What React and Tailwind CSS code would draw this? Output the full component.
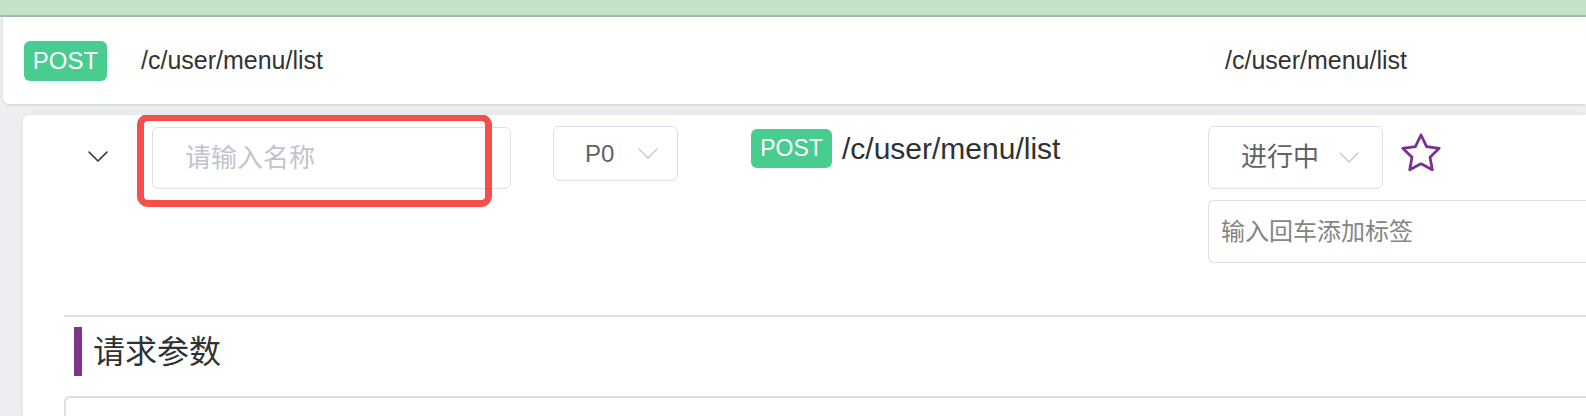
import React from "react";

const font = { fontFamily: '"Liberation Sans", "Noto Sans CJK SC", sans-serif' };

function Chevron({ className, color = "#333", sw = 1.6 }) {
  return (
    <svg viewBox="0 0 20 11" className={className} fill="none">
      <path d="M1 1 L10 10 L19 1" stroke={color} strokeWidth={sw} strokeLinecap="round" strokeLinejoin="round" />
    </svg>
  );
}

function Star() {
  return (
    <svg viewBox="0 0 44 42" className="w-[44px] h-[42px]" fill="none">
      <path
        d="M22 3 L27.6 14.6 L40.2 16.3 L31 25.2 L33.3 37.8 L22 31.8 L10.7 37.8 L13 25.2 L3.8 16.3 L16.4 14.6 Z"
        stroke="#7b2f8f"
        strokeWidth="2.8"
        strokeLinejoin="round"
      />
    </svg>
  );
}

export default function App() {
  return (
    <div className="w-[1586px] h-[416px] overflow-hidden bg-[#eceef1] flex flex-col" style={font}>
      <div className="h-[17px] shrink-0 bg-[#c4e2c6] border-b-2 border-[#a4bba6]" />
      <div className="ml-[3px] h-[87px] shrink-0 bg-white rounded-bl-md shadow-sm flex items-center pl-[21px]">
        <div className="shrink-0 w-[83px] h-[40px] rounded-[6px] bg-[#49cc90] text-white text-[24px] flex items-center justify-center">
          POST
        </div>
        <div className="shrink-0 ml-[34px] w-[1084px] text-[25px] text-[#333]">/c/user/menu/list</div>
        <div className="shrink-0 text-[25px] text-[#333]">/c/user/menu/list</div>
      </div>
      <div className="mt-[11px] ml-[23px] flex-1 bg-white rounded-tl-md shadow-[0_0_6px_rgba(0,0,0,0.06)] relative pt-[11px] overflow-hidden">
        <div className="flex items-start">
          <div className="shrink-0 ml-[65px] mt-[25px] w-[20px]">
            <Chevron className="w-[20px] h-[11px]" />
          </div>
          <div className="shrink-0 ml-[44px] mt-[1px] w-[359px] h-[62px] border-[1.5px] border-[#dcdfe6] rounded-[6px] flex items-center pl-[32px] text-[26px] text-[#c0c4cc]">
            请输入名称
          </div>
          <div className="shrink-0 ml-[42px] w-[125px] h-[55px] border-[1.5px] border-[#dcdfe6] rounded-[6px] flex items-center pl-[31px] text-[24px] text-[#606266]">
            <span>P0</span>
            <Chevron className="ml-[24px] w-[20px] h-[11px]" color="#c0c4cc" sw={1.2} />
          </div>
          <div className="shrink-0 ml-[73px] w-[457px] flex items-center">
            <div className="shrink-0 w-[81px] h-[39px] rounded-[6px] bg-[#49cc90] text-white text-[23px] flex items-center justify-center">
              POST
            </div>
            <div className="ml-[10px] text-[30px] text-[#303133]">/c/user/menu/list</div>
          </div>
          <div className="shrink-0 flex flex-col">
            <div className="flex items-start">
              <div className="shrink-0 w-[175px] h-[63px] border-[1.5px] border-[#dcdfe6] rounded-[6px] flex items-center pl-[32px] text-[26px] text-[#606266]">
                <span>进行中</span>
                <Chevron className="ml-[20px] w-[20px] h-[11px]" color="#c0c4cc" sw={1.2} />
              </div>
              <div className="shrink-0 ml-[16px] mt-[6px]">
                <Star />
              </div>
            </div>
            <div className="mt-[11px] w-[420px] h-[63px] border-[1.5px] border-r-0 border-[#dcdfe6] rounded-l-[6px] flex items-center pl-[12px] text-[24px] text-[#858585]">
              输入回车添加标签
            </div>
          </div>
        </div>
        <div className="ml-[41px] mt-[52px] h-[2px] bg-[#dcdfe6]" />
        <div className="ml-[51px] mt-[10px] flex items-center">
          <div className="shrink-0 w-[8px] h-[49px] bg-[#7b3589]" />
          <div className="ml-[11px] text-[32px] text-[#303133] leading-none">请求参数</div>
        </div>
        <div className="ml-[41px] mt-[20px] h-[60px] border-2 border-r-0 border-[#dcdfe6] rounded-l-[6px]" />
        <div className="absolute left-[114px] top-[-1px] w-[355px] h-[93px] border-[7px] border-[#f54f4c] rounded-[11px]" />
      </div>
    </div>
  );
}
